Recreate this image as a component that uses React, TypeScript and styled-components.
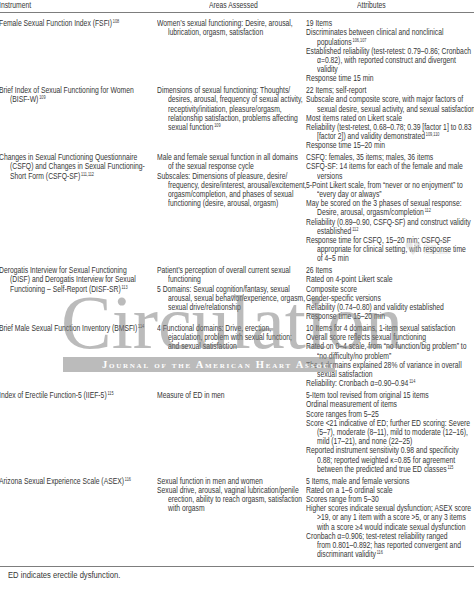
import styled, { createGlobalStyle } from "styled-components"

type Row = {
  instrument: string[]
  areas: string[][]
  attributes: string[][]
}

const rows: Row[] = [
  {
    instrument: ["Female Sexual Function Index (FSFI)^108"],
    areas: [["Women’s sexual functioning: Desire, arousal,", "lubrication, orgasm, satisfaction"]],
    attributes: [
      ["19 Items"],
      ["Discriminates between clinical and nonclinical", "populations^106,107"],
      ["Established reliability (test-retest: 0.79–0.86; Cronbach", "α=0.82), with reported construct and divergent", "validity"],
      ["Response time 15 min"],
    ],
  },
  {
    instrument: ["Brief Index of Sexual Functioning for Women", "(BISF-W)^109"],
    areas: [
      [
        "Dimensions of sexual functioning: Thoughts/",
        "desires, arousal, frequency of sexual activity,",
        "receptivity/initiation, pleasure/orgasm,",
        "relationship satisfaction, problems affecting",
        "sexual function^109",
      ],
    ],
    attributes: [
      ["22 Items; self-report"],
      ["Subscale and composite score, with major factors of", "sexual desire, sexual activity, and sexual satisfaction"],
      ["Most items rated on Likert scale"],
      ["Reliability (test-retest, 0.68–0.78; 0.39 [factor 1] to 0.83", "[factor 2]) and validity demonstrated^109,110"],
      ["Response time 15–20 min"],
    ],
  },
  {
    instrument: [
      "Changes in Sexual Functioning Questionnaire",
      "(CSFQ) and Changes in Sexual Functioning-",
      "Short Form (CSFQ-SF)^111,112",
    ],
    areas: [
      ["Male and female sexual function in all domains", "of the sexual response cycle"],
      [
        "Subscales: Dimensions of pleasure, desire/",
        "frequency, desire/interest, arousal/excitement,",
        "orgasm/completion, and phases of sexual",
        "functioning (desire, arousal, orgasm)",
      ],
    ],
    attributes: [
      ["CSFQ: females, 35 items; males, 36 items"],
      ["CSFQ-SF: 14 items for each of the female and male", "versions"],
      ["5-Point Likert scale, from “never or no enjoyment” to", "“every day or always”"],
      ["May be scored on the 3 phases of sexual response:", "Desire, arousal, orgasm/completion^112"],
      ["Reliability (0.89–0.90, CSFQ-SF) and construct validity", "established^112"],
      ["Response time for CSFQ, 15–20 min; CSFQ-SF", "appropriate for clinical setting, with response time", "of 4–5 min"],
    ],
  },
  {
    instrument: [
      "Derogatis Interview for Sexual Functioning",
      "(DISF) and Derogatis Interview for Sexual",
      "Functioning – Self-Report (DISF-SR)^113",
    ],
    areas: [
      ["Patient’s perception of overall current sexual", "functioning"],
      ["5 Domains: Sexual cognition/fantasy, sexual", "arousal, sexual behavior/experience, orgasm,", "sexual drive/relationship"],
    ],
    attributes: [
      ["26 Items"],
      ["Rated on 4-point Likert scale"],
      ["Composite score"],
      ["Gender-specific versions"],
      ["Reliability (0.74–0.80) and validity established"],
      ["Response time 15–20 min"],
    ],
  },
  {
    instrument: ["Brief Male Sexual Function Inventory (BMSFI)^114"],
    areas: [["4 Functional domains: Drive, erection,", "ejaculation, problem with sexual function;", "and sexual satisfaction"]],
    attributes: [
      ["10 Items for 4 domains, 1-item sexual satisfaction"],
      ["Overall score reflects sexual functioning"],
      ["Rated on 0–4 scale, from “no function/big problem” to", "“no difficulty/no problem”"],
      ["The 4 domains explained 28% of variance in overall", "sexual satisfaction"],
      ["Reliability: Cronbach α=0.90–0.94^114"],
    ],
  },
  {
    instrument: ["Index of Erectile Function-5 (IIEF-5)^115"],
    areas: [["Measure of ED in men"]],
    attributes: [
      ["5-Item tool revised from original 15 items"],
      ["Ordinal measurement of items"],
      ["Score ranges from 5–25"],
      [
        "Score <21 indicative of ED; further ED scoring: Severe",
        "(5–7), moderate (8–11), mild to moderate (12–16),",
        "mild (17–21), and none (22–25)",
      ],
      [
        "Reported instrument sensitivity 0.98 and specificity",
        "0.88; reported weighted κ=0.85 for agreement",
        "between the predicted and true ED classes^115",
      ],
    ],
  },
  {
    instrument: ["Arizona Sexual Experience Scale (ASEX)^116"],
    areas: [
      ["Sexual function in men and women"],
      ["Sexual drive, arousal, vaginal lubrication/penile", "erection, ability to reach orgasm, satisfaction", "with orgasm"],
    ],
    attributes: [
      ["5 Items, male and female versions"],
      ["Rated on a 1–6 ordinal scale"],
      ["Scores range from 5–30"],
      [
        "Higher scores indicate sexual dysfunction; ASEX score",
        ">19, or any 1 item with a score >5, or any 3 items",
        "with a score ≥4 would indicate sexual dysfunction",
      ],
      ["Cronbach α=0.906; test-retest reliability ranged", "from 0.801–0.892; has reported convergent and", "discriminant validity^116"],
    ],
  },
]

// "text^ref" -> text with a superscript reference
const Text = ({ value }: { value: string }) => {
  const [main, ref] = value.split("^")
  return (
    <>
      {main}
      {ref && <Ref>{ref}</Ref>}
    </>
  )
}

const Entry = ({ lines }: { lines: string[] }) => (
  <Item>
    {lines.map((line, i) => (
      <Line key={i} indent={i > 0}>
        <Text value={line} />
      </Line>
    ))}
  </Item>
)

const App = () => {
  return (
    <Page>
      <GlobalStyle />
      <Table>
        <HeadCell>
          <Label>Instrument</Label>
        </HeadCell>
        <HeadCell offset={52}>
          <Label>Areas Assessed</Label>
        </HeadCell>
        <HeadCell offset={51}>
          <Label>Attributes</Label>
        </HeadCell>

        {rows.map((row, r) => (
          <BodyRow key={r} first={r === 0}>
            <Cell>
              <Entry lines={row.instrument} />
            </Cell>
            <Cell>
              {row.areas.map((lines, i) => (
                <Entry key={i} lines={lines} />
              ))}
            </Cell>
            <Cell>
              {row.attributes.map((lines, i) => (
                <Entry key={i} lines={lines} />
              ))}
            </Cell>
          </BodyRow>
        ))}
      </Table>
      <Footnote>
        <Label>ED indicates erectile dysfunction.</Label>
      </Footnote>

      <AhaMark>
        <svg width="16" height="18" viewBox="0 0 16 18">
          <path d="M8 17 L1.5 9.5 C-0.5 7 0.8 3.2 4 3.2 C6 3.2 7.2 4.6 8 6 C8.8 4.6 10 3.2 12 3.2 C15.2 3.2 16.5 7 14.5 9.5 Z" fill="#bbb" />
          <path d="M8 1 L8.6 12" stroke="#fff" strokeWidth="1.2" />
        </svg>
        <AhaText>
          American
          <br />
          Heart
          <br />
          Association.
        </AhaText>
      </AhaMark>
      <Wordmark>Circulation</Wordmark>
      <Banner>
        <BannerText>Journal of the American Heart Association</BannerText>
      </Banner>
    </Page>
  )
}

const GlobalStyle = createGlobalStyle`
  html, body {
    margin: 0;
    padding: 0;
    background: #ffffff;
    overflow: hidden;
  }
`

const Page = styled.div`
  position: relative;
  width: 474px;
  height: 593px;
  overflow: hidden;
  font-family: "Liberation Sans", Arial, sans-serif;
  font-size: 8.2px;
  line-height: 9.2px;
  color: #363636;
`

const Table = styled.div`
  display: grid;
  grid-template-columns: 158px 149px 1fr;
  margin-left: -1px;
  border-bottom: 1.5px solid #7d7d7d;
  padding-bottom: 7px;
`

// condensed face: no narrow family installed, so squeeze horizontally
const Label = styled.span`
  display: inline-block;
  white-space: nowrap;
  transform: scaleX(0.83);
  transform-origin: 0 0;
`

const HeadCell = styled.div<{ offset?: number }>`
  padding: 1px 0 1.5px ${(p) => p.offset ?? 0}px;
  border-bottom: 1.5px solid #7d7d7d;
`

const BodyRow = styled.div<{ first: boolean }>`
  display: contents;

  & > div {
    padding-top: ${(p) => (p.first ? 6.5 : 2.6)}px;
  }
`

const Cell = styled.div`
  display: flex;
  flex-direction: column;
  min-width: 0;
`

const Item = styled.div`
  display: flex;
  flex-direction: column;
  align-items: flex-start;
`

const Line = styled.div<{ indent: boolean }>`
  margin-left: ${(p) => (p.indent ? 11 : 0)}px;
  white-space: nowrap;
  transform: scaleX(0.83);
  transform-origin: 0 0;
`

const Ref = styled.sup`
  font-size: 4.6px;
  line-height: 0;
  vertical-align: 3px;
  margin-left: 1px;
`

const Footnote = styled.div`
  padding: 3px 0 0 8px;
  font-size: 9.2px;
  line-height: 11px;
`

const Wordmark = styled.div`
  position: absolute;
  left: 61px;
  top: 284px;
  font-family: "Liberation Serif", "Times New Roman", serif;
  font-size: 76px;
  line-height: 76px;
  color: rgba(125, 125, 125, 0.52);
  white-space: nowrap;
  pointer-events: none;
`

const Banner = styled.div`
  position: absolute;
  left: 63px;
  top: 357px;
  width: 272px;
  height: 15px;
  overflow: hidden;
  background: rgba(145, 145, 145, 0.62);
  padding-left: 39px;
  box-sizing: border-box;
`

const BannerText = styled.div`
  color: #ffffff;
  font-family: "Liberation Serif", "Times New Roman", serif;
  font-variant: small-caps;
  font-weight: bold;
  font-size: 10.5px;
  line-height: 15px;
  letter-spacing: 1.75px;
  white-space: nowrap;
`

const AhaMark = styled.div`
  position: absolute;
  left: 405px;
  top: 238px;
  display: flex;
  align-items: center;
  gap: 3px;
  opacity: 0.35;
`

const AhaText = styled.div`
  font-size: 5px;
  line-height: 5.5px;
  color: #999;
`

export default App
